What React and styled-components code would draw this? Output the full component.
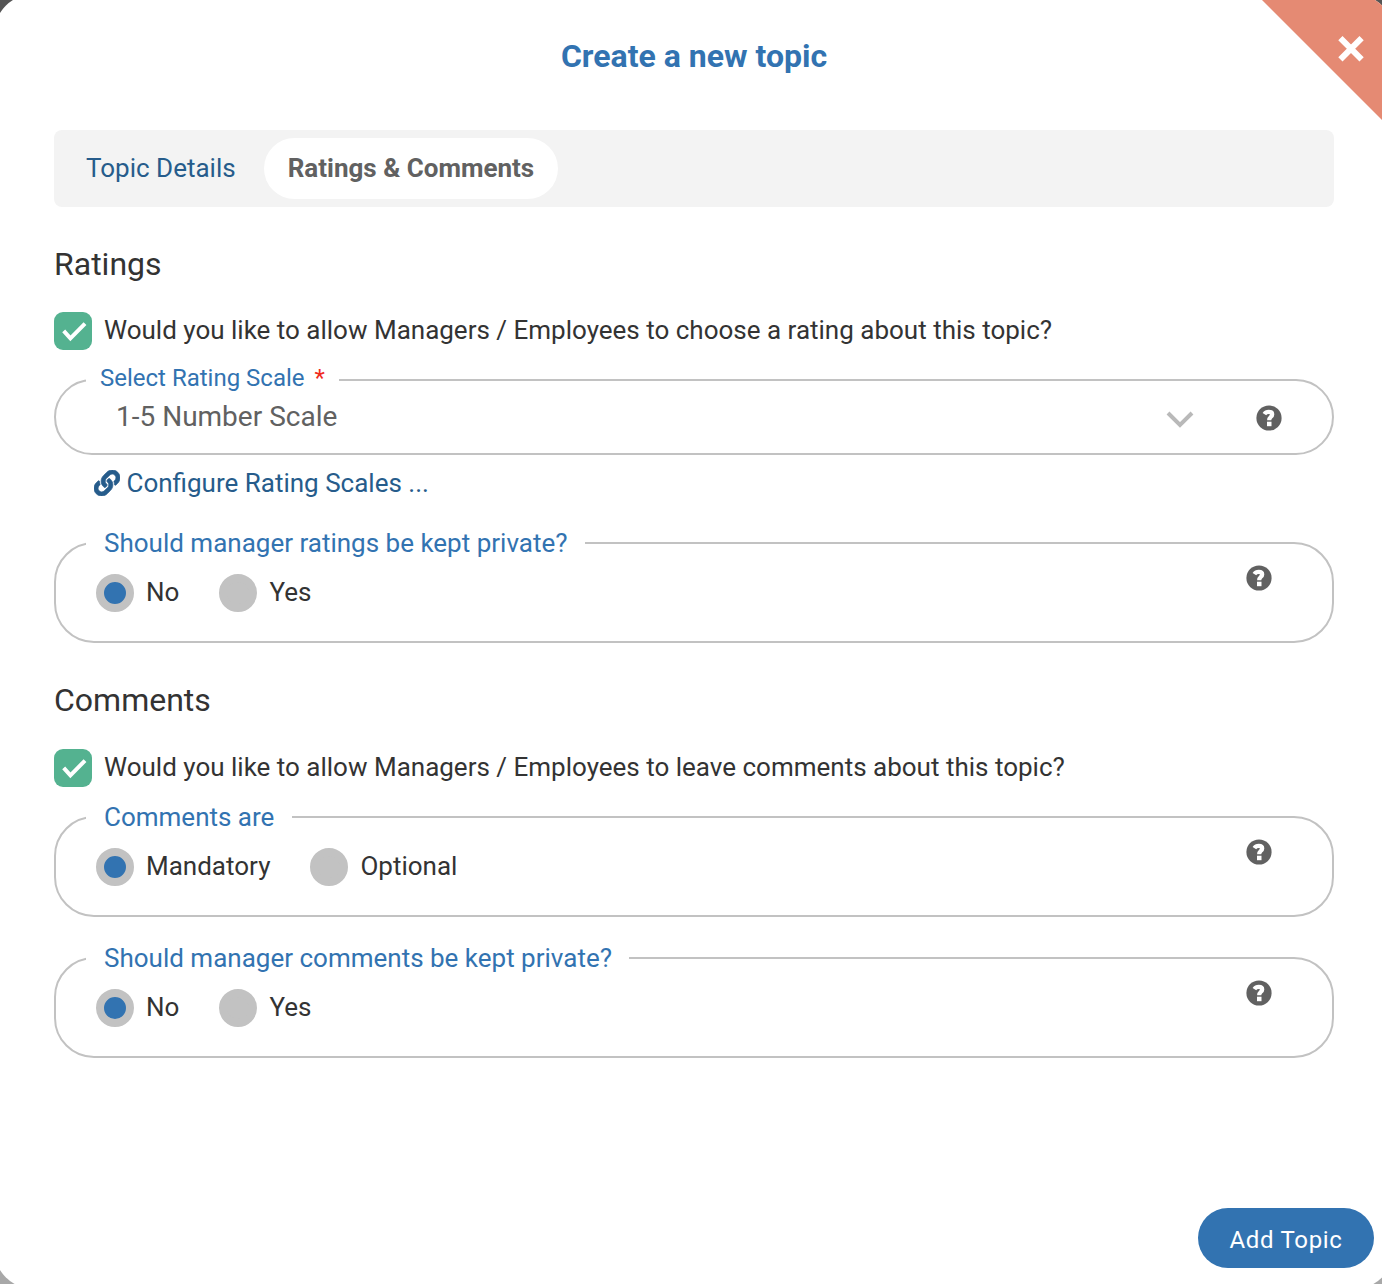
import React, { useState } from 'react';
import styled, { createGlobalStyle } from 'styled-components';
import { FaLink } from 'react-icons/fa';

const GlobalStyle = createGlobalStyle`
  * {
    box-sizing: border-box;
  }

  body {
    margin: 0;
    font-family: Roboto, "Liberation Sans", sans-serif;
    font-size: 26px;
    color: #333;
  }
`;

const Backdrop = styled.div`
  height: 1284px;
  overflow: hidden;
  background: linear-gradient(#555 0%, #555 50%, #a8a8a8 51%, #a8a8a8 100%);
`;

const Dialog = styled.div`
  display: flex;
  flex-direction: column;
  height: 1295px;
  margin: -6px -12px 0 -6px;
  padding: 6px 60px 21px 60px;
  border-radius: 40px;
  background: #fff;
  position: relative;
  overflow: hidden;
`;

const CloseCorner = styled.button`
  position: absolute;
  top: 0;
  right: 0;
  width: 138px;
  height: 138px;
  padding: 0;
  border: 0;
  background: #e58a73;
  clip-path: polygon(0 0, 100% 0, 100% 100%);
  cursor: pointer;

  svg {
    position: absolute;
    left: 81px;
    top: 41px;
  }
`;

const Title = styled.h1`
  margin: 36px 0 0;
  font-size: 32px;
  font-weight: 700;
  line-height: 40px;
  text-align: center;
  color: #3273b1;
`;

const Tabs = styled.div`
  display: flex;
  align-items: center;
  height: 77px;
  margin-top: 54px;
  padding: 8px;
  border-radius: 8px;
  background: #f3f3f3;
`;

const Tab = styled.button`
  height: 61px;
  padding: 0 24px 2px;
  border: 0;
  border-radius: 31px;
  margin-right: 4px;
  font-family: inherit;
  font-size: 26px;
  font-weight: ${(props) => (props.$active ? 700 : 400)};
  color: ${(props) => (props.$active ? '#616161' : '#265c8b')};
  background: ${(props) => (props.$active ? '#fff' : 'transparent')};
`;

const SectionTitle = styled.h2`
  margin: 37px 0 0;
  font-size: 32px;
  font-weight: 400;
  line-height: 40px;
`;

const CheckRow = styled.div`
  display: flex;
  align-items: center;
  gap: 12px;
  height: 38px;
  margin-top: ${(props) => props.$top}px;
`;

const CheckBox = styled.span`
  display: flex;
  align-items: center;
  justify-content: center;
  width: 38px;
  height: 38px;
  border-radius: 9px;
  background: #54b290;
`;

const CheckLabel = styled.span`
  line-height: 36px;
  height: 38px;
`;

const Field = styled.fieldset`
  height: ${(props) => props.$height}px;
  margin: ${(props) => props.$top}px 0 0;
  padding: 0 ${(props) => props.$right || 60}px 0 30px;
  border: 2px solid #c2c2c2;
  border-radius: 40px;
  min-width: 0;
`;

const Legend = styled.legend`
  height: 30px;
  padding: 0 17.5px 0 18px;
  line-height: 30px;
  color: #3273b1;
`;

const SelectLegend = styled(Legend)`
  padding: 0 14px;
  font-size: 24px;
  line-height: 26px;
`;

const Required = styled.span`
  margin-left: 10px;
  color: #f02a1c;
`;

const SelectRow = styled.div`
  display: flex;
  align-items: center;
  height: 42px;
  padding-left: 30px;
  font-size: 28px;
  color: #616161;
`;

const SelectValue = styled.span`
  flex: 1;
`;

const Chevron = styled.svg`
  margin: 8px 62px 0 0;
`;

const HelpSvg = styled.svg`
  width: 26px;
  height: 26px;
  margin-top: ${(props) => props.$top}px;
`;

const ConfigureLink = styled.a`
  display: flex;
  align-items: center;
  gap: 6.5px;
  height: 32px;
  margin: 12px 0 0 40px;
  color: #265c8b;

  svg {
    margin-top: -1px;
    stroke: #265c8b;
    stroke-width: 14px;
  }
`;

const RadioRow = styled.div`
  display: flex;
  align-items: flex-start;
  gap: 40px;
  padding: 16px 0 0 10px;

  > svg {
    margin-left: auto;
  }
`;

const Radio = styled.label`
  display: flex;
  gap: 12px;
  height: 38px;
  line-height: 36px;
`;

const RadioDot = styled.span`
  width: 38px;
  height: 38px;
  border: 8px solid #c2c2c2;
  border-radius: 50%;
  background: ${(props) => (props.$checked ? '#3273b1' : '#c2c2c2')};
`;

const Footer = styled.div`
  display: flex;
  justify-content: flex-end;
  margin: auto -40px 0 0;
`;

const AddButton = styled.button`
  width: 176px;
  height: 60px;
  padding: 3px 0 0;
  border: 0;
  border-radius: 30px;
  font-family: inherit;
  font-size: 24px;
  letter-spacing: 0.7px;
  color: #fff;
  background: #3273b1;
`;

const HelpIcon = ({ top }) => (
  <HelpSvg $top={top} viewBox="0 0 26 26">
    <circle cx="13" cy="13" r="12.6" fill="#616161" />
    <path
      d="M8.4 9.2C9.4 7.6 10.9 6.9 12.8 6.9C14.9 6.9 16.2 7.9 16.2 9.4C16.2 11.9 13.2 11.6 13.2 15.2"
      fill="none"
      stroke="#fff"
      strokeWidth="4.2"
    />
    <rect x="11" y="16.7" width="4.5" height="4.5" fill="#fff" />
  </HelpSvg>
);

const Question = ({ top, children }) => (
  <CheckRow $top={top}>
    <CheckBox>
      <svg width="38" height="38" viewBox="0 0 38 38">
        <path d="M9.7 18.8L16.4 26.3L31 11.6" fill="none" stroke="#fff" strokeWidth="4" />
      </svg>
    </CheckBox>
    <CheckLabel>{children}</CheckLabel>
  </CheckRow>
);

const RadioField = ({ legend, options, top }) => {
  const [selected, setSelected] = useState(0);

  return (
    <Field $height={115} $top={top}>
      <Legend>{legend}</Legend>
      <RadioRow>
        {options.map((option, i) => (
          <Radio key={option} onClick={() => setSelected(i)}>
            <RadioDot $checked={selected === i} />
            {option}
          </Radio>
        ))}
        <HelpIcon top={-9} />
      </RadioRow>
    </Field>
  );
};

const App = () => {
  const [tab, setTab] = useState(1);

  return (
    <Backdrop>
      <GlobalStyle />
      <Dialog>
        <CloseCorner aria-label="Close">
          <svg width="28" height="28" viewBox="0 0 28 28">
            <path d="M3.4 3.2L24.6 24.4M24.6 3.2L3.4 24.4" stroke="#fff" strokeWidth="6" />
          </svg>
        </CloseCorner>

        <Title>Create a new topic</Title>

        <Tabs>
          <Tab $active={tab === 0} onClick={() => setTab(0)}>Topic Details</Tab>
          <Tab $active={tab === 1} onClick={() => setTab(1)}>Ratings &amp; Comments</Tab>
        </Tabs>

        <SectionTitle>Ratings</SectionTitle>
        <Question top={28}>Would you like to allow Managers / Employees to choose a rating about this topic?</Question>

        <Field $height={90} $top={15} $right={50}>
          <SelectLegend>
            Select Rating Scale<Required>*</Required>
          </SelectLegend>
          <SelectRow>
            <SelectValue>1-5 Number Scale</SelectValue>
            <Chevron width="28" height="18" viewBox="0 0 28 18">
              <path d="M2 2L14 14L26 2" fill="none" stroke="#b9b9b9" strokeWidth="4" />
            </Chevron>
            <HelpIcon top={3} />
          </SelectRow>
        </Field>
        <ConfigureLink>
          <FaLink size={26} />
          Configure Rating Scales ...
        </ConfigureLink>

        <RadioField legend="Should manager ratings be kept private?" options={['No', 'Yes']} top={29} />

        <SectionTitle>Comments</SectionTitle>
        <Question top={29}>Would you like to allow Managers / Employees to leave comments about this topic?</Question>

        <RadioField legend="Comments are" options={['Mandatory', 'Optional']} top={15} />
        <RadioField legend="Should manager comments be kept private?" options={['No', 'Yes']} top={26} />

        <Footer>
          <AddButton>Add Topic</AddButton>
        </Footer>
      </Dialog>
    </Backdrop>
  );
};

export default App;
